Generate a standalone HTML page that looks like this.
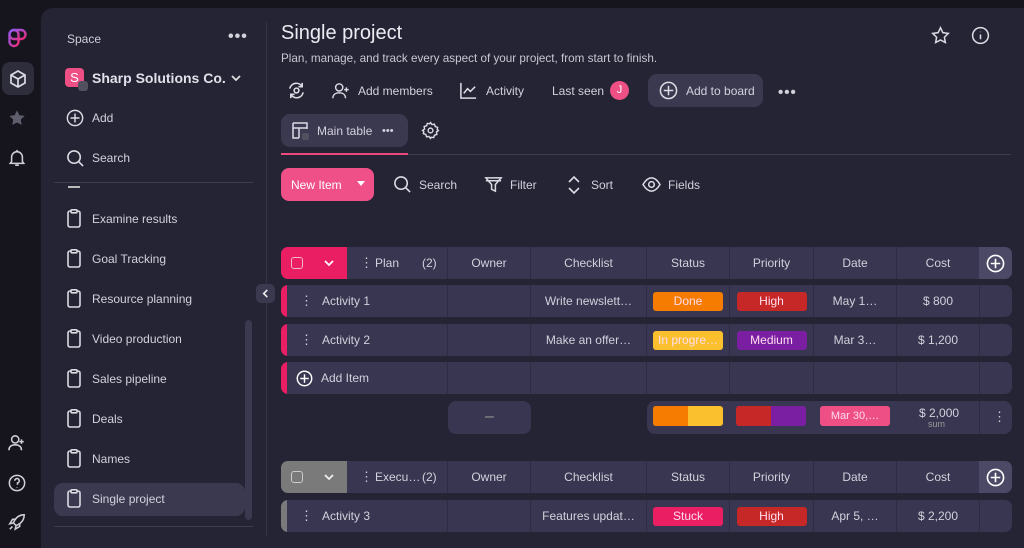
<!DOCTYPE html>
<html><head><meta charset="utf-8"><style>
*{box-sizing:border-box;margin:0;padding:0}
body{width:1024px;height:537px;overflow:hidden;background:#16151d;font-family:"Liberation Sans",sans-serif;color:#d6d4df;position:relative}
.a{position:absolute}
.t{position:absolute;font-size:12px;color:#d3d1dc;white-space:nowrap}
.row{position:absolute;left:281px;width:731px;height:32px;background:#383650;border-radius:7px;overflow:hidden}
.c{position:absolute;top:0;height:100%;border-left:1px solid #2d2c40;font-size:12px;display:flex;align-items:center;justify-content:center;color:#d3d1dc}
.pill{width:70px;height:19px;border-radius:3px;display:flex;align-items:center;justify-content:center;color:#fde;font-size:12px}
svg{position:absolute}
</style></head><body>
<!-- rail icons -->
<svg style="left:7px;top:27px" width="22" height="22" viewBox="0 0 22 22"><defs><linearGradient id="g" x1="0" y1="0" x2="1" y2="1"><stop offset="0" stop-color="#8a5cf6"/><stop offset="1" stop-color="#ec2a74"/></linearGradient></defs><rect x="2.5" y="3" width="9" height="16" rx="4.5" fill="none" stroke="url(#g)" stroke-width="2.4"/><rect x="2.5" y="3" width="16" height="9" rx="4.5" fill="none" stroke="url(#g)" stroke-width="2.4"/></svg>
<div class="a" style="left:2px;top:62px;width:32px;height:33px;background:#2e2d3c;border-radius:8px"></div>
<svg style="left:8px;top:69px" width="20" height="20" viewBox="0 0 20 20" fill="none" stroke="#dcdbe4" stroke-width="1.7"><path d="M10 2l7 4v8l-7 4-7-4V6zM3 6l7 4 7-4M10 10v8"/></svg>
<svg style="left:8px;top:109px" width="18" height="18" viewBox="0 0 20 20"><path d="M10 1.5l2.6 5.4 5.9.8-4.3 4.1 1 5.9L10 15l-5.2 2.7 1-5.9L1.5 7.7l5.9-.8z" fill="#5f5e6c"/></svg>
<svg style="left:8px;top:148px" width="18" height="20" viewBox="0 0 20 20" fill="none" stroke="#d0cfd8" stroke-width="1.7"><path d="M4 14V9a6 6 0 0 1 12 0v5l1.5 2h-15zM8 18h4M10 1v2"/></svg>
<svg style="left:8px;top:434px" width="18" height="18" viewBox="0 0 20 20" fill="none" stroke="#d0cfd8" stroke-width="1.7"><circle cx="8" cy="6" r="4"/><path d="M1 18c0-4 3-6 7-6s7 2 7 6M15 6v5M12.5 8.5h5"/></svg>
<svg style="left:8px;top:474px" width="18" height="18" viewBox="0 0 20 20" fill="none" stroke="#d0cfd8" stroke-width="1.7"><circle cx="10" cy="10" r="8.5"/><path d="M7.5 7.5a2.5 2.5 0 1 1 3 2.5v2M10 14.5v.5"/></svg>
<svg style="left:8px;top:513px" width="18" height="18" viewBox="0 0 20 20" fill="none" stroke="#d0cfd8" stroke-width="1.7"><path d="M18 2c-6 0-10 4-12 9l3 3c5-2 9-6 9-12zM6 11l-4 1 3-5h4M9 14l-1 4 5-3v-4M5 15l-3 3"/></svg>
<!-- main panel -->
<div class="a" style="left:41px;top:8px;width:1000px;height:540px;background:#252434;border-radius:12px 0 0 0"></div>
<div class="a" style="left:266px;top:22px;width:1px;height:515px;background:#34334a"></div>
<!-- sidebar -->
<div class="t" style="left:67px;top:32px;font-size:12px;color:#cfcdd8">Space</div>
<div class="t" style="left:228px;top:28px;font-size:16px;letter-spacing:1px;font-weight:bold">•••</div>
<div class="a" style="left:65px;top:68px;width:19px;height:19px;background:#ee4f85;border-radius:4px;color:#fff;font-size:13px;text-align:center;line-height:19px">S</div>
<div class="a" style="left:78px;top:81px;width:10px;height:10px;background:#50505e;border-radius:3px"></div>
<div class="t" style="left:92px;top:70px;font-size:14px;font-weight:bold;color:#e2e0ea">Sharp Solutions Co.</div>
<svg style="left:230px;top:73px" width="12" height="10" viewBox="0 0 12 10" fill="none" stroke="#ddd" stroke-width="1.8"><path d="M2 3l4 4 4-4"/></svg>
<svg style="left:66px;top:109px" width="18" height="18" viewBox="0 0 20 20" fill="none" stroke="#dcdbe4" stroke-width="1.6"><circle cx="10" cy="10" r="8.5"/><path d="M10 5v10M5 10h10"/></svg>
<div class="t" style="left:92px;top:111px">Add</div>
<svg style="left:66px;top:149px" width="19" height="19" viewBox="0 0 20 20" fill="none" stroke="#dcdbe4" stroke-width="1.7"><circle cx="8.5" cy="8.5" r="6.5"/><path d="M13.5 13.5l4.5 4.5"/></svg>
<div class="t" style="left:92px;top:151px">Search</div>
<div class="a" style="left:54px;top:182px;width:199px;height:1px;background:#3b3a4f"></div>
<div class="a" style="left:68px;top:186px;width:12px;height:2px;background:#bbb"></div>
<div class="a" style="left:54px;top:483px;width:191px;height:33px;background:#3b3950;border-radius:9px"></div>
<div class="a" style="left:245px;top:320px;width:7px;height:200px;background:#3b3950;border-radius:4px"></div>
<div class="a" style="left:54px;top:526px;width:199px;height:1px;background:#3b3a4f"></div>
<!-- collapse -->
<div class="a" style="left:256px;top:284px;width:19px;height:19px;background:#3b3950;border-radius:5px"></div>
<svg style="left:261px;top:289px" width="9" height="9" viewBox="0 0 10 10" fill="none" stroke="#eee" stroke-width="1.8"><path d="M7 1L3 5l4 4"/></svg>
<!-- header -->
<div class="t" style="left:281px;top:22px;font-size:20px;color:#ecebf2">Single project</div>
<div class="t" style="left:281px;top:52px;font-size:11.7px;color:#c9c7d2">Plan, manage, and track every aspect of your project, from start to finish.</div>
<svg style="left:931px;top:26px" width="19" height="19" viewBox="0 0 20 20" fill="none" stroke="#dcdbe4" stroke-width="1.6"><path d="M10 1.8l2.5 5.2 5.7.8-4.1 4 1 5.6L10 14.7l-5.1 2.7 1-5.6-4.1-4 5.7-.8z"/></svg>
<svg style="left:971px;top:26px" width="19" height="19" viewBox="0 0 20 20" fill="none" stroke="#dcdbe4" stroke-width="1.6"><circle cx="10" cy="10" r="8.3"/><path d="M10 9v5M10 6v.5"/></svg>
<svg style="left:287px;top:81px" width="19" height="19" viewBox="0 0 20 20" fill="none" stroke="#dcdbe4" stroke-width="1.7"><path d="M3 8a7 7 0 0 1 13-2M17 12a7 7 0 0 1-13 2M16 2v4h-4M4 18v-4h4"/><circle cx="10" cy="10" r="2.5"/></svg>
<svg style="left:332px;top:82px" width="18" height="18" viewBox="0 0 20 20" fill="none" stroke="#dcdbe4" stroke-width="1.6"><circle cx="8" cy="6" r="4"/><path d="M1 18c0-4 3-6 7-6s7 2 7 6M16 6v5M13.5 8.5h5"/></svg>
<div class="t" style="left:358px;top:84px">Add members</div>
<svg style="left:459px;top:81px" width="19" height="19" viewBox="0 0 20 20" fill="none" stroke="#dcdbe4" stroke-width="1.6"><path d="M2 2v16h16M5 13l4-5 3 3 5-5"/></svg>
<div class="t" style="left:486px;top:84px">Activity</div>
<div class="t" style="left:552px;top:84px">Last seen</div>
<div class="a" style="left:610px;top:81px;width:19px;height:19px;border-radius:50%;background:#ee4f85;color:#fff;font-size:11px;text-align:center;line-height:19px">J</div>
<div class="a" style="left:648px;top:74px;width:115px;height:33px;background:#3b3950;border-radius:9px"></div>
<svg style="left:659px;top:81px" width="19" height="19" viewBox="0 0 20 20" fill="none" stroke="#dcdbe4" stroke-width="1.6"><circle cx="10" cy="10" r="8.5"/><path d="M10 5v10M5 10h10"/></svg>
<div class="t" style="left:686px;top:84px">Add to board</div>
<div class="t" style="left:778px;top:84px;font-size:15px;font-weight:bold;letter-spacing:1px">•••</div>
<div class="a" style="left:281px;top:114px;width:127px;height:33px;background:#3b3950;border-radius:9px"></div>
<svg style="left:291px;top:121px" width="20" height="20" viewBox="0 0 20 20" fill="none" stroke="#dcdbe4" stroke-width="1.5"><path d="M2 2h14v6M2 2v15h6M2 7h14M8 7v10"/><rect x="11" y="12" width="7" height="7" rx="2" fill="#50505e" stroke="none"/></svg>
<div class="t" style="left:317px;top:124px">Main table</div>
<div class="t" style="left:382px;top:125px;font-size:11px">•••</div>
<svg style="left:421px;top:121px" width="19" height="19" viewBox="0 0 24 24" fill="none" stroke="#dcdbe4" stroke-width="1.8"><circle cx="12" cy="12" r="3"/><path d="M12 2l2 2.5 3-.5 1 3 3 1-.5 3L22 12l-2.5 2 .5 3-3 1-1 3-3-.5L12 22l-2-2.5-3 .5-1-3-3-1 .5-3L2 12l2.5-2-.5-3 3-1 1-3 3 .5z"/></svg>
<div class="a" style="left:281px;top:154px;width:730px;height:1px;background:#3d3c52"></div>
<div class="a" style="left:281px;top:153px;width:127px;height:2px;background:#ec4a7f"></div>
<div class="a" style="left:281px;top:168px;width:93px;height:33px;background:#ef5087;border-radius:8px"></div>
<div class="t" style="left:291px;top:178px;color:#fff">New Item</div>
<svg style="left:357px;top:181px" width="8" height="6" viewBox="0 0 8 6"><path d="M0 0h8L4 5z" fill="#fff"/></svg>
<svg style="left:393px;top:175px" width="19" height="19" viewBox="0 0 20 20" fill="none" stroke="#dcdbe4" stroke-width="1.7"><circle cx="8.5" cy="8.5" r="6.5"/><path d="M13.5 13.5l4.5 4.5"/></svg>
<div class="t" style="left:419px;top:178px">Search</div>
<svg style="left:484px;top:175px" width="19" height="19" viewBox="0 0 20 20" fill="none" stroke="#dcdbe4" stroke-width="1.6"><path d="M2 3h16l-6 7v7l-4-2v-5zM2 6h16"/></svg>
<div class="t" style="left:510px;top:178px">Filter</div>
<svg style="left:567px;top:176px" width="14" height="18" viewBox="0 0 14 18" fill="none" stroke="#dcdbe4" stroke-width="1.6"><path d="M2 6l5-5 5 5M2 12l5 5 5-5"/></svg>
<div class="t" style="left:591px;top:178px">Sort</div>
<svg style="left:642px;top:176px" width="19" height="17" viewBox="0 0 20 18" fill="none" stroke="#dcdbe4" stroke-width="1.6"><path d="M1 9c3-5 6-7 9-7s6 2 9 7c-3 5-6 7-9 7s-6-2-9-7z"/><circle cx="10" cy="9" r="3"/></svg>
<div class="t" style="left:668px;top:178px">Fields</div>

<!-- group 1 -->
<div class="row" style="top:247px">
 <div class="a" style="left:0;top:0;width:66px;height:32px;background:#e91e63"></div>
 <div class="a" style="left:10px;top:10px;width:12px;height:12px;border:1.5px solid #f5b7cc;border-radius:3px"></div>
 <svg style="left:43px;top:12px" width="10" height="8" viewBox="0 0 10 8" fill="none" stroke="#fff" stroke-width="1.8"><path d="M1 2l4 4 4-4"/></svg>
 <div class="t" style="left:79px;top:8px;font-size:13px">⋮</div>
 <div class="t" style="left:94px;top:9px">Plan</div><div class="t" style="left:141px;top:9px">(2)</div>
 <div class="c" style="left:166px;width:83px">Owner</div><div class="c" style="left:249px;width:116px">Checklist</div>
 <div class="c" style="left:365px;width:83px">Status</div><div class="c" style="left:448px;width:84px">Priority</div>
 <div class="c" style="left:532px;width:83px">Date</div><div class="c" style="left:615px;width:83px">Cost</div>
 <div class="c" style="left:698px;width:33px;background:#4b4966;border:0"><svg style="left:7px;top:7px" width="19" height="19" viewBox="0 0 20 20" fill="none" stroke="#fff" stroke-width="1.7"><circle cx="10" cy="10" r="8.5"/><path d="M10 5v10M5 10h10"/></svg></div>
</div>
<div class="row" style="top:285px"><div class="a" style="left:0;top:0;width:6px;height:32px;background:#e91e63"></div>
 <div class="t" style="left:19px;top:8px;font-size:13px">⋮</div><div class="t" style="left:41px;top:9px">Activity 1</div>
 <div class="c" style="left:166px;width:83px"></div><div class="c" style="left:249px;width:116px">Write newslett…</div>
 <div class="c" style="left:365px;width:83px"><div class="pill" style="background:#f57c00">Done</div></div>
 <div class="c" style="left:448px;width:84px"><div class="pill" style="background:#c62828">High</div></div>
 <div class="c" style="left:532px;width:83px">May 1…</div><div class="c" style="left:615px;width:83px">$ 800</div><div class="c" style="left:698px;width:33px"></div></div>
<div class="row" style="top:324px"><div class="a" style="left:0;top:0;width:6px;height:32px;background:#e91e63"></div>
 <div class="t" style="left:19px;top:8px;font-size:13px">⋮</div><div class="t" style="left:41px;top:9px">Activity 2</div>
 <div class="c" style="left:166px;width:83px"></div><div class="c" style="left:249px;width:116px">Make an offer…</div>
 <div class="c" style="left:365px;width:83px"><div class="pill" style="background:#fbc02d">In progre…</div></div>
 <div class="c" style="left:448px;width:84px"><div class="pill" style="background:#7b1fa2">Medium</div></div>
 <div class="c" style="left:532px;width:83px">Mar 3…</div><div class="c" style="left:615px;width:83px">$ 1,200</div><div class="c" style="left:698px;width:33px"></div></div>
<div class="row" style="top:362px"><div class="a" style="left:0;top:0;width:6px;height:32px;background:#e91e63"></div>
 <svg style="left:15px;top:8px" width="17" height="17" viewBox="0 0 20 20" fill="none" stroke="#fff" stroke-width="1.7"><circle cx="10" cy="10" r="8.5"/><path d="M10 5v10M5 10h10"/></svg>
 <div class="t" style="left:40px;top:9px">Add Item</div>
 <div class="c" style="left:166px;width:83px"></div><div class="c" style="left:249px;width:116px"></div><div class="c" style="left:365px;width:83px"></div><div class="c" style="left:448px;width:84px"></div><div class="c" style="left:532px;width:83px"></div><div class="c" style="left:615px;width:83px"></div><div class="c" style="left:698px;width:33px"></div></div>
<div class="a" style="left:448px;top:401px;width:83px;height:33px;background:#383650;border-radius:8px;text-align:center;line-height:31px;color:#999">–</div>
<div class="a" style="left:647px;top:401px;width:365px;height:33px;background:#383650;border-radius:8px">
 <div class="a" style="left:6px;top:5px;width:70px;height:20px;border-radius:3px;overflow:hidden;background:#fbc02d"><div style="width:35px;height:20px;background:#f57c00"></div></div>
 <div class="a" style="left:89px;top:5px;width:70px;height:20px;border-radius:3px;overflow:hidden;background:#7b1fa2"><div style="width:35px;height:20px;background:#c62828"></div></div>
 <div class="a pill" style="left:173px;top:5px;height:20px;background:#ee4f85;font-size:11px">Mar 30,…</div>
 <div class="t" style="left:272px;top:5px">$ 2,000</div><div class="t" style="left:281px;top:18px;font-size:9px;color:#999">sum</div>
 <div class="a" style="left:332px;top:0;width:1px;height:33px;background:#2d2c40"></div>
 <div class="t" style="left:346px;top:8px;font-size:13px">⋮</div>
</div>
<!-- group 2 -->
<div class="row" style="top:461px">
 <div class="a" style="left:0;top:0;width:66px;height:32px;background:#7a7a7a"></div>
 <div class="a" style="left:10px;top:10px;width:12px;height:12px;border:1.5px solid #ccc;border-radius:3px"></div>
 <svg style="left:43px;top:12px" width="10" height="8" viewBox="0 0 10 8" fill="none" stroke="#eee" stroke-width="1.8"><path d="M1 2l4 4 4-4"/></svg>
 <div class="t" style="left:79px;top:8px;font-size:13px">⋮</div>
 <div class="t" style="left:94px;top:9px">Execu…</div><div class="t" style="left:141px;top:9px">(2)</div>
 <div class="c" style="left:166px;width:83px">Owner</div><div class="c" style="left:249px;width:116px">Checklist</div>
 <div class="c" style="left:365px;width:83px">Status</div><div class="c" style="left:448px;width:84px">Priority</div>
 <div class="c" style="left:532px;width:83px">Date</div><div class="c" style="left:615px;width:83px">Cost</div>
 <div class="c" style="left:698px;width:33px;background:#4b4966;border:0"><svg style="left:7px;top:7px" width="19" height="19" viewBox="0 0 20 20" fill="none" stroke="#fff" stroke-width="1.7"><circle cx="10" cy="10" r="8.5"/><path d="M10 5v10M5 10h10"/></svg></div>
</div>
<div class="row" style="top:500px"><div class="a" style="left:0;top:0;width:6px;height:32px;background:#7a7a7a"></div>
 <div class="t" style="left:19px;top:8px;font-size:13px">⋮</div><div class="t" style="left:41px;top:9px">Activity 3</div>
 <div class="c" style="left:166px;width:83px"></div><div class="c" style="left:249px;width:116px">Features updat…</div>
 <div class="c" style="left:365px;width:83px"><div class="pill" style="background:#e91e63">Stuck</div></div>
 <div class="c" style="left:448px;width:84px"><div class="pill" style="background:#c62828">High</div></div>
 <div class="c" style="left:532px;width:83px">Apr 5, …</div><div class="c" style="left:615px;width:83px">$ 2,200</div><div class="c" style="left:698px;width:33px"></div></div>

<!-- sidebar list -->
<svg style="left:65px;top:209px" width="18" height="300" viewBox="0 0 18 300" fill="none" stroke="#dcdbe4" stroke-width="1.6">
<g id="cb"><rect x="3" y="2" width="12" height="16" rx="2"/><rect x="6" y="0.8" width="6" height="3" rx="1" fill="#252434"/></g>
<use href="#cb" y="40"/><use href="#cb" y="80"/><use href="#cb" y="120"/><use href="#cb" y="160"/><use href="#cb" y="200"/><use href="#cb" y="240"/><use href="#cb" y="280"/>
</svg>
<div class="t" style="left:92px;top:212px">Examine results</div>
<div class="t" style="left:92px;top:252px">Goal Tracking</div>
<div class="t" style="left:92px;top:292px">Resource planning</div>
<div class="t" style="left:92px;top:332px">Video production</div>
<div class="t" style="left:92px;top:372px">Sales pipeline</div>
<div class="t" style="left:92px;top:412px">Deals</div>
<div class="t" style="left:92px;top:452px">Names</div>
<div class="t" style="left:92px;top:492px">Single project</div>
</body></html>
